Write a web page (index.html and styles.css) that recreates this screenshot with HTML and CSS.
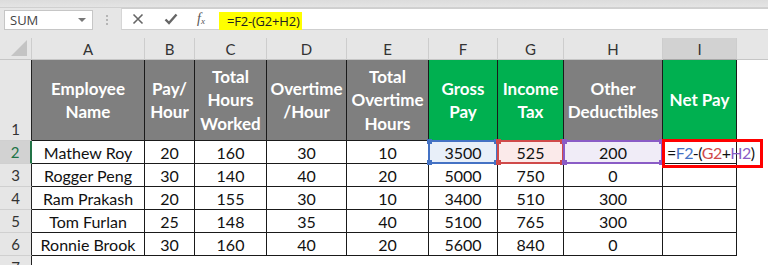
FILE: index.html
```html
<!DOCTYPE html>
<html lang="en">
  <head>
    <meta charset="UTF-8" />
    <meta name="viewport" content="width=device-width, initial-scale=1.0" />
    <title>Net Pay</title>
    <link rel="stylesheet" href="styles.css">
  </head>
  <body>
    <div class="top">
      <div class="strip"></div>
      <div class="formula-row">
        <div class="namebox">SUM<span class="caret"></span></div>
        <div class="grip"><i></i><i></i><i></i></div>
        <div class="fbar">
          <div class="fbuttons">
            <svg width="12" height="12" viewBox="0 0 12 12"><path d="M1.5 1.5 L10.5 10.5 M10.5 1.5 L1.5 10.5" stroke="#666" stroke-width="1.6" fill="none"/></svg>
            <svg width="14" height="12" viewBox="0 0 14 12"><path d="M1.5 6.5 L5 10 L12.5 1.5" stroke="#666" stroke-width="2.4" fill="none"/></svg>
            <span class="fx">f<sub>x</sub></span>
          </div>
          <div class="finput"><span class="hl">=F2-(G2+H2)</span></div>
        </div>
      </div>
    </div>

    <div class="sheet">
      <div class="colhead corner"><span class="tri"></span></div>
      <div class="colhead">A</div>
      <div class="colhead">B</div>
      <div class="colhead">C</div>
      <div class="colhead">D</div>
      <div class="colhead">E</div>
      <div class="colhead">F</div>
      <div class="colhead">G</div>
      <div class="colhead">H</div>
      <div class="colhead sel">I</div>
      <div class="colhead rest"></div>

      <div class="rowhead bottom">1</div>
      <div class="th gray first">Employee<br>Name</div>
      <div class="th gray">Pay/<br>Hour</div>
      <div class="th gray">Total<br>Hours<br>Worked</div>
      <div class="th gray">Overtime<br>/Hour</div>
      <div class="th gray">Total<br>Overtime<br>Hours</div>
      <div class="th green">Gross<br>Pay</div>
      <div class="th green">Income<br>Tax</div>
      <div class="th gray">Other<br>Deductibles</div>
      <div class="th green">Net Pay</div>
      <div class="blank"></div>

      <div class="rowhead sel">2</div>
      <div class="td first">Mathew Roy</div>
      <div class="td">20</div>
      <div class="td">160</div>
      <div class="td">30</div>
      <div class="td">10</div>
      <div class="td ref ref-f">3500<span class="range"><b></b><b></b><b></b><b></b></span></div>
      <div class="td ref ref-g">525<span class="range"><b></b><b></b><b></b><b></b></span></div>
      <div class="td ref ref-h">200<span class="range"><b></b><b></b><b></b><b></b></span></div>
      <div class="td edit">=<span class="c-f">F2</span>-(<span class="c-g">G2</span>+<span class="c-h">H2</span>)<span class="mark"></span></div>
      <div class="blank"></div>

      <div class="rowhead">3</div>
      <div class="td first">Rogger Peng</div>
      <div class="td">30</div>
      <div class="td">140</div>
      <div class="td">40</div>
      <div class="td">20</div>
      <div class="td">5000</div>
      <div class="td">750</div>
      <div class="td">0</div>
      <div class="td"></div>
      <div class="blank"></div>

      <div class="rowhead">4</div>
      <div class="td first">Ram Prakash</div>
      <div class="td">20</div>
      <div class="td">155</div>
      <div class="td">30</div>
      <div class="td">10</div>
      <div class="td">3400</div>
      <div class="td">510</div>
      <div class="td">300</div>
      <div class="td"></div>
      <div class="blank"></div>

      <div class="rowhead">5</div>
      <div class="td first">Tom Furlan</div>
      <div class="td">25</div>
      <div class="td">148</div>
      <div class="td">35</div>
      <div class="td">40</div>
      <div class="td">5100</div>
      <div class="td">765</div>
      <div class="td">300</div>
      <div class="td"></div>
      <div class="blank"></div>

      <div class="rowhead">6</div>
      <div class="td first">Ronnie Brook</div>
      <div class="td">30</div>
      <div class="td">160</div>
      <div class="td">40</div>
      <div class="td">20</div>
      <div class="td">5600</div>
      <div class="td">840</div>
      <div class="td">0</div>
      <div class="td"></div>
      <div class="blank"></div>

      <div class="rowhead">7</div>
    </div>
  </body>
</html>
```

FILE: styles.css
```css
  body {
    margin: 0;
    background-color: white;
    font-family: Lato, "Liberation Sans", sans-serif;
    overflow: hidden;
  }

  .top {
    height: 38px;
    background-color: #e6e6e6;
  }
  .strip {
    height: 8px;
    background: linear-gradient(#dcdcdc, #e4e4e4);
    border-bottom: 1px solid #d0d0d0;
    box-sizing: border-box;
  }
  .formula-row {
    display: flex;
    align-items: flex-start;
    height: 22px;
  }
  .namebox {
    box-sizing: border-box;
    margin: 2px 0 0 4px;
    width: 89px;
    height: 20px;
    background-color: white;
    border: 1px solid #c6c6c6;
    font-family: "Open Sans", sans-serif;
    font-size: 13px;
    color: #444;
    display: flex;
    align-items: center;
    justify-content: space-between;
    padding: 0 6px 0 5px;
  }
  .caret {
    width: 0;
    height: 0;
    border-left: 4px solid transparent;
    border-right: 4px solid transparent;
    border-top: 4px solid #777;
  }
  .grip {
    width: 28px;
    display: flex;
    flex-direction: column;
    align-items: center;
    gap: 2px;
    padding-top: 7px;
  }
  .grip i {
    width: 2px;
    height: 2px;
    background-color: #b5b5b5;
  }
  .fbar {
    flex: 1;
    display: flex;
    height: 22px;
    box-sizing: border-box;
    background-color: white;
    border-top: 1px solid #cfcfcf;
    border-bottom: 1px solid #cfcfcf;
    border-left: 1px solid #d6d6d6;
  }
  .fbuttons {
    width: 97px;
    display: flex;
    align-items: center;
    justify-content: space-between;
    padding: 0 14px 0 10px;
    box-sizing: border-box;
  }
  .fx {
    font-family: "Liberation Serif", serif;
    font-style: italic;
    font-size: 14px;
    color: #555;
  }
  .fx sub {
    font-size: 9px;
    vertical-align: -1px;
  }
  .finput {
    flex: 1;
    padding-top: 1px;
  }
  .hl {
    display: inline-block;
    height: 18px;
    width: 83px;
    box-sizing: border-box;
    background-color: #ffff00;
    font-family: "Open Sans", sans-serif;
    font-size: 13px;
    line-height: 18px;
    padding-left: 8px;
    white-space: nowrap;
    letter-spacing: -0.2px;
    color: #222;
  }

  .sheet {
    display: grid;
    grid-template-columns: 32px 113px 50px 72px 80px 82px 69px 66px 99px 74px 1fr;
    grid-template-rows: 22px 81px 23px 23px 23px 23px 23px 23px;
    font-size: 16px;
    color: #111;
  }
  .colhead {
    background-color: #e6e6e6;
    border-right: 1px solid #cdcdcd;
    border-bottom: 1px solid #c6c6c6;
    box-sizing: border-box;
    display: flex;
    align-items: center;
    justify-content: center;
    color: #333;
    font-size: 15px;
  }
  .colhead.sel {
    background-color: #d2d2d2;
    border-bottom: 1px solid #a8a8a8;
  }
  .colhead.rest {
    border-right: none;
  }
  .corner {
    position: relative;
  }
  .tri {
    position: absolute;
    right: 4px;
    bottom: 3px;
    width: 0;
    height: 0;
    border-left: 16px solid transparent;
    border-bottom: 16px solid #c4c4c4;
  }
  .rowhead {
    background-color: #e6e6e6;
    border-right: 1px solid #222;
    border-bottom: 1px solid #d0d0d0;
    box-sizing: border-box;
    display: flex;
    align-items: center;
    justify-content: center;
    color: #333;
    font-size: 15px;
  }
  .rowhead.bottom {
    align-items: flex-end;
    padding-bottom: 2px;
  }
  .rowhead.sel {
    background-color: #d2d2d2;
    border-right: 2px solid #217346;
    color: #217346;
  }

  .th {
    box-sizing: border-box;
    border-right: 1px solid #1a1a1a;
    border-bottom: 1px solid #1a1a1a;
    color: white;
    font-weight: bold;
    font-size: 17px;
    line-height: 23.5px;
    text-align: center;
    display: flex;
    align-items: center;
    justify-content: center;
  }
  .gray {
    background-color: #7f7f7f;
  }
  .green {
    background-color: #00b050;
  }
  .td {
    box-sizing: border-box;
    border-right: 1px solid #1a1a1a;
    border-bottom: 1px solid #1a1a1a;
    display: flex;
    align-items: center;
    justify-content: center;
    padding-top: 1px;
  }
  .blank {
    background-color: white;
  }

  .ref {
    position: relative;
  }
  .ref-f {
    background-color: #e8eff9;
    --c: #4472c4;
  }
  .ref-g {
    background-color: #fbeaea;
    --c: #d04a4a;
  }
  .ref-h {
    background-color: #f0ecf7;
    --c: #8a5cc6;
  }
  .range {
    position: absolute;
    left: -1px;
    top: -1px;
    right: -1px;
    bottom: -1px;
    border: 2px solid var(--c);
  }
  .range b {
    position: absolute;
    width: 5px;
    height: 5px;
    background-color: var(--c);
  }
  .range b:nth-child(1) { left: -3px; top: -3px; }
  .range b:nth-child(2) { right: -3px; top: -3px; }
  .range b:nth-child(3) { left: -3px; bottom: -3px; }
  .range b:nth-child(4) { right: -3px; bottom: -3px; }

  .edit {
    position: relative;
    justify-content: flex-start;
    padding-left: 4px;
    white-space: nowrap;
    overflow: visible;
    letter-spacing: -0.6px;
    z-index: 2;
  }
  .c-f {
    color: #4472c4;
  }
  .c-g {
    color: #d04a4a;
  }
  .c-h {
    color: #8a5cc6;
  }
  .mark {
    position: absolute;
    left: -1px;
    top: -2px;
    width: 101px;
    height: 29px;
    box-sizing: border-box;
    border: 3px solid #ff0000;
  }
```
